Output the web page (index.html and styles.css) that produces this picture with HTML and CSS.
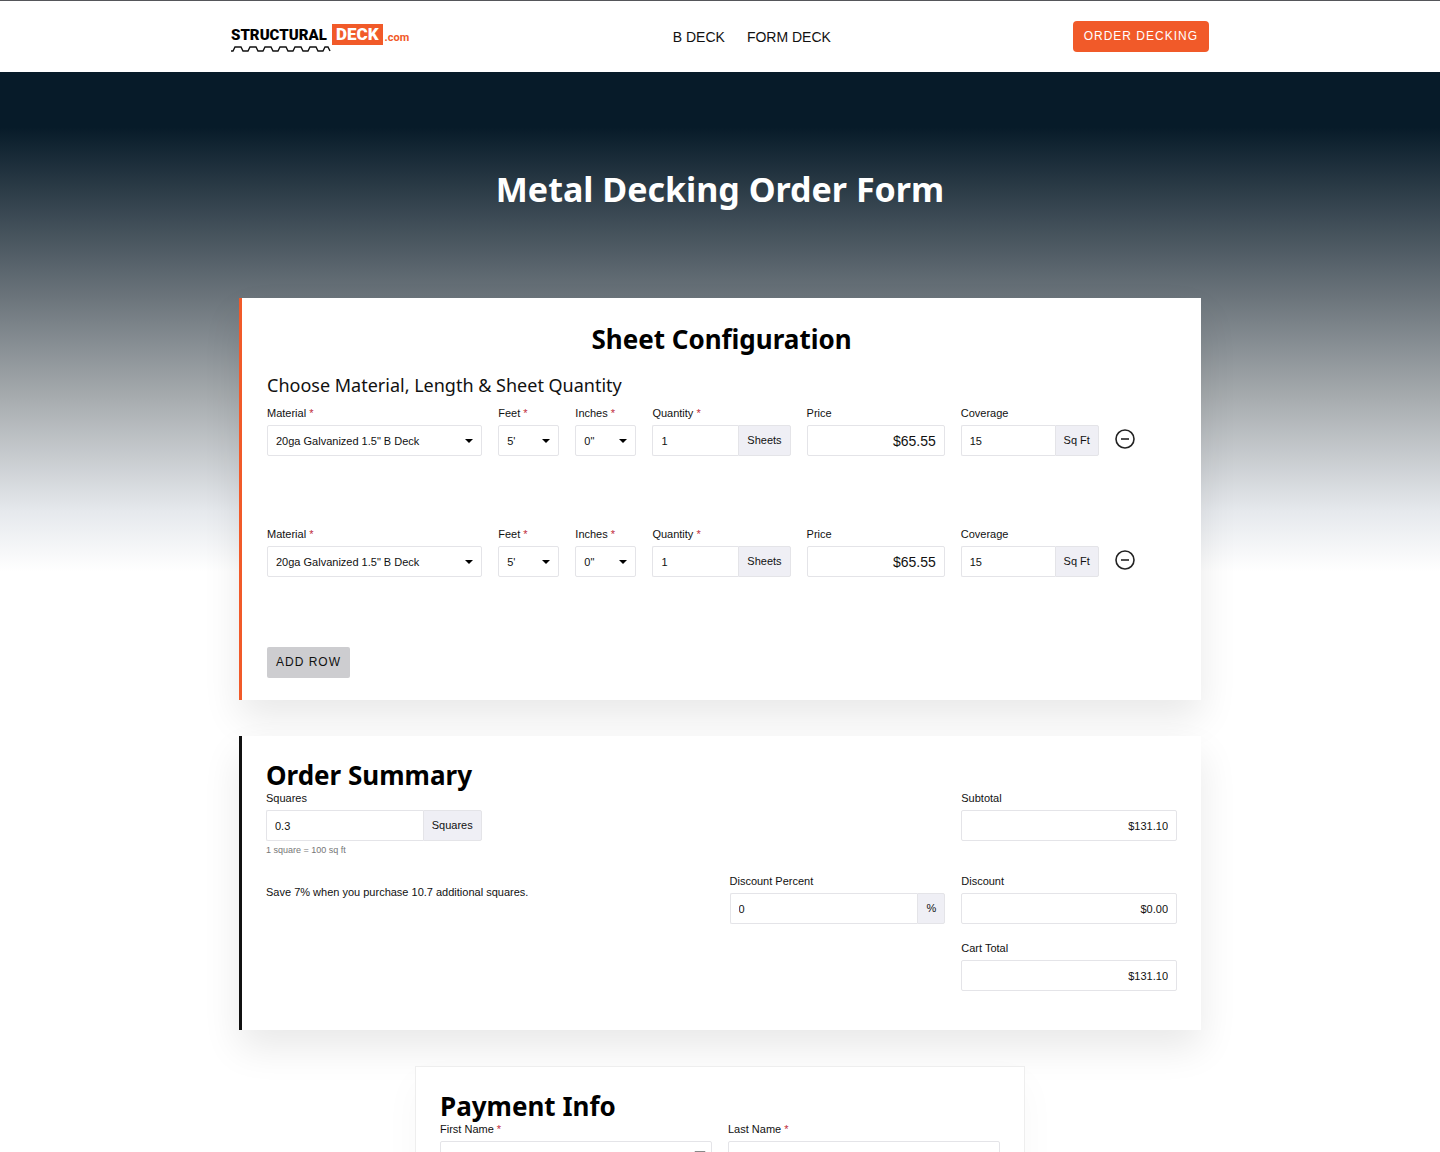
FILE: index.html
```html
<!DOCTYPE html>
<html lang="en">
  <head>
    <meta charset="UTF-8" />
    <meta name="viewport" content="width=device-width, initial-scale=1.0" />
    <title>Metal Decking Order Form | StructuralDeck.com</title>
    <link rel="stylesheet" href="styles.css">
  </head>
  <body>
    <header class="header">
      <div class="header-inner">
        <a class="logo" href="#" aria-label="StructuralDeck.com">
          <span class="logo-structural">
            STRUCTURAL
            <svg width="100" height="6" viewBox="0 0 100 6">
              <path
                d="M0 5H2L4 1H10L12 5H17L19 1H25L27 5H32L34 1H40L42 5H47L49 1H55L57 5H62L64 1H70L72 5H77L79 1H85L87 5H92L94 1H97L99 5"
                fill="none"
                stroke="#111"
                stroke-width="1.4"
              />
            </svg>
          </span>
          <span class="logo-deck">DECK</span>
          <span class="logo-com">.com</span>
        </a>
        <nav class="nav">
          <a href="#">B DECK</a>
          <a href="#">FORM DECK</a>
        </nav>
        <a class="btn btn-order" href="#">ORDER DECKING</a>
      </div>
    </header>

    <main class="main">
      <h1>Metal Decking Order Form</h1>

      <form class="order-form">
        <section class="card card-config">
          <h2>Sheet Configuration</h2>
          <h3>Choose Material, Length &amp; Sheet Quantity</h3>

          <div class="row">
            <div class="field wide">
              <label for="material1">Material <i>*</i></label>
              <select id="material1"><option>20ga Galvanized 1.5" B Deck</option></select>
            </div>
            <div class="field">
              <label for="feet1">Feet <i>*</i></label>
              <select id="feet1"><option>5'</option></select>
            </div>
            <div class="field">
              <label for="inches1">Inches <i>*</i></label>
              <select id="inches1"><option>0"</option></select>
            </div>
            <div class="field double">
              <label for="qty1">Quantity <i>*</i></label>
              <div class="group">
                <input id="qty1" type="text" value="1" />
                <span class="addon">Sheets</span>
              </div>
            </div>
            <div class="field double">
              <label for="price1">Price</label>
              <input id="price1" class="price" type="text" value="$65.55" readonly />
            </div>
            <div class="field double">
              <label for="coverage1">Coverage</label>
              <div class="group">
                <input id="coverage1" type="text" value="15" readonly />
                <span class="addon">Sq Ft</span>
              </div>
            </div>
            <button class="remove" type="button" aria-label="Remove row">
              <svg width="20" height="20" viewBox="0 0 20 20">
                <circle cx="10" cy="10" r="9" />
                <path d="M6 10H14" />
              </svg>
            </button>
          </div>

          <div class="row">
            <div class="field wide">
              <label for="material2">Material <i>*</i></label>
              <select id="material2"><option>20ga Galvanized 1.5" B Deck</option></select>
            </div>
            <div class="field">
              <label for="feet2">Feet <i>*</i></label>
              <select id="feet2"><option>5'</option></select>
            </div>
            <div class="field">
              <label for="inches2">Inches <i>*</i></label>
              <select id="inches2"><option>0"</option></select>
            </div>
            <div class="field double">
              <label for="qty2">Quantity <i>*</i></label>
              <div class="group">
                <input id="qty2" type="text" value="1" />
                <span class="addon">Sheets</span>
              </div>
            </div>
            <div class="field double">
              <label for="price2">Price</label>
              <input id="price2" class="price" type="text" value="$65.55" readonly />
            </div>
            <div class="field double">
              <label for="coverage2">Coverage</label>
              <div class="group">
                <input id="coverage2" type="text" value="15" readonly />
                <span class="addon">Sq Ft</span>
              </div>
            </div>
            <button class="remove" type="button" aria-label="Remove row">
              <svg width="20" height="20" viewBox="0 0 20 20">
                <circle cx="10" cy="10" r="9" />
                <path d="M6 10H14" />
              </svg>
            </button>
          </div>

          <button class="btn btn-add" type="button">ADD ROW</button>
        </section>

        <section class="card card-summary">
          <h2>Order Summary</h2>
          <div class="summary">
            <div class="field">
              <label for="squares">Squares</label>
              <div class="group">
                <input id="squares" type="text" value="0.3" readonly />
                <span class="addon">Squares</span>
              </div>
              <small>1 square = 100 sq ft</small>
            </div>
            <div class="field last">
              <label for="subtotal">Subtotal</label>
              <input id="subtotal" class="money" type="text" value="$131.10" readonly />
            </div>
            <p class="save">Save 7% when you purchase 10.7 additional squares.</p>
            <div class="field third">
              <label for="percent">Discount Percent</label>
              <div class="group">
                <input id="percent" type="text" value="0" readonly />
                <span class="addon">%</span>
              </div>
            </div>
            <div class="field last">
              <label for="discount">Discount</label>
              <input id="discount" class="money" type="text" value="$0.00" readonly />
            </div>
            <div class="field last">
              <label for="total">Cart Total</label>
              <input id="total" class="money" type="text" value="$131.10" readonly />
            </div>
          </div>
        </section>

        <section class="card card-payment">
          <h2>Payment Info</h2>
          <div class="payment">
            <div class="field">
              <label for="first">First Name <i>*</i></label>
              <input id="first" class="contact" type="text" />
            </div>
            <div class="field">
              <label for="last">Last Name <i>*</i></label>
              <input id="last" type="text" />
            </div>
          </div>
        </section>
      </form>
    </main>
  </body>
</html>
```

FILE: styles.css
```css
* {
  box-sizing: border-box;
}
body {
  margin: 0;
  font-family: 'Liberation Sans', Arial, sans-serif;
  font-size: 11px;
  line-height: 16px;
  color: #111;
  background: #fff;
}
a {
  color: inherit;
  text-decoration: none;
}
h1,
h2,
h3,
p {
  margin: 0;
}
h1,
h2,
h3 {
  font-family: 'Noto Sans', Tahoma, sans-serif;
}
h1 {
  padding: 92px 16px 84px;
  font-size: 34px;
  line-height: 50px;
  text-align: center;
  color: #fff;
}
h2 {
  font-size: 26px;
  line-height: 30px;
  color: #000;
}
h3 {
  margin: 19px 0 8px;
  font-size: 18px;
  line-height: 24px;
  font-weight: normal;
}

.header {
  border-top: 1px solid #55565a;
  background: #fff;
}
.header-inner {
  display: flex;
  align-items: center;
  justify-content: space-between;
  max-width: 978px;
  height: 71px;
  margin: 0 auto;
}
.logo {
  display: flex;
  align-items: flex-start;
  width: 200px;
  height: 26px;
  font-family: Roboto, sans-serif;
  font-weight: 900;
}
.logo-structural {
  width: 101px;
  font-size: 15px;
  line-height: 22px;
  color: #000;
}
.logo-structural svg {
  display: block;
}
.logo-deck {
  padding: 0 4px;
  font-size: 17px;
  line-height: 21px;
  color: #fff;
  background: #f15a29;
}
.logo-com {
  padding-left: 2px;
  font-size: 11px;
  font-weight: bold;
  line-height: 28px;
  color: #f15a29;
}
.nav {
  display: flex;
  gap: 22px;
  font-size: 14px;
}
.btn {
  height: 31px;
  border: 0;
  border-radius: 4px;
  font-family: inherit;
  font-size: 12px;
  line-height: 31px;
  letter-spacing: 1px;
}
.btn-order {
  padding: 0 11px;
  color: #fff;
  background: #f15a29;
}
.btn-add {
  display: block;
  padding: 0 9px;
  border-radius: 2px;
  color: #111;
  background: #cdcdd0;
}

.main {
  background: linear-gradient(
      #071b29 0,
      #071b29 11%,
      #6b747b 45%,
      #a6abae 65%,
      #e6e9ed 88%,
      #fff 100%
    )
    no-repeat;
  background-size: 100% 500px;
}
.order-form {
  display: flex;
  flex-direction: column;
  gap: 36px;
  max-width: 962px;
  margin: 0 auto;
  padding-bottom: 36px;
}
.card {
  padding: 24px;
  border-left: 3px solid #111;
  background: #fff;
  box-shadow: 0 18px 36px rgba(0, 0, 0, 0.09);
}
.card-config {
  padding: 26px 25px 22px;
  border-color: #f15a29;
}
.card-config h2 {
  text-align: center;
}
.card-summary {
  padding-bottom: 39px;
}
.card-payment {
  width: 100%;
  max-width: 610px;
  margin: 0 auto;
  border: 1px solid #eee;
  box-shadow: 0 16px 36px rgba(0, 0, 0, 0.03);
}

.row {
  display: grid;
  grid-template-columns: repeat(12, 1fr);
  gap: 16px;
  padding-bottom: 70px;
}
.wide {
  grid-column: span 3;
}
.double {
  grid-column: span 2;
}
.summary {
  display: grid;
  grid-template-columns: repeat(4, 1fr);
  gap: 16px;
}
.third {
  grid-column: 3;
}
.last {
  grid-column: 4;
}
.save {
  grid-column: 1 / 3;
  padding-top: 11px;
}
.payment {
  display: grid;
  grid-template-columns: 1fr 1fr;
  gap: 16px;
}

.field {
  min-width: 0;
}
label {
  display: block;
  margin-bottom: 4px;
}
label i {
  font-style: normal;
  color: #c02b3c;
}
small {
  display: block;
  margin-top: 2px;
  font-size: 9px;
  line-height: 14px;
  color: #777;
}
input,
select {
  display: block;
  width: 100%;
  height: 31px;
  padding: 0 8px;
  border: 1px solid #e4e4e8;
  border-radius: 2px;
  font-family: inherit;
  font-size: 11px;
  color: #111;
  background: #fff;
}
select {
  appearance: none;
  background: #fff
    url("data:image/svg+xml,%3Csvg xmlns='http://www.w3.org/2000/svg' viewBox='0 0 8 4'%3E%3Cpath d='M0 0h8L4 4z'/%3E%3C/svg%3E")
    no-repeat right 8px center;
  background-size: 8px 4px;
}
.group {
  display: flex;
}
.group input {
  flex: 1;
  min-width: 0;
  border-right: 0;
  border-radius: 2px 0 0 2px;
}
.addon {
  padding: 0 8px;
  border: 1px solid #e4e4e8;
  border-radius: 0 2px 2px 0;
  line-height: 29px;
  background: #efeff5;
}
.price {
  font-size: 14px;
  text-align: right;
}
.money {
  text-align: right;
}
.contact {
  background: #fff
    url("data:image/svg+xml,%3Csvg xmlns='http://www.w3.org/2000/svg' viewBox='0 0 12 12'%3E%3Cpath d='M1 .5h10v11H1z' fill='none' stroke='%23888'/%3E%3C/svg%3E")
    no-repeat right 5px center;
  background-size: 12px 12px;
}
.remove {
  width: 20px;
  height: 20px;
  margin-top: 24px;
  padding: 0;
  border: 0;
  background: none;
}
.remove svg {
  display: block;
  fill: none;
  stroke: #222;
  stroke-width: 1.6;
}
```
